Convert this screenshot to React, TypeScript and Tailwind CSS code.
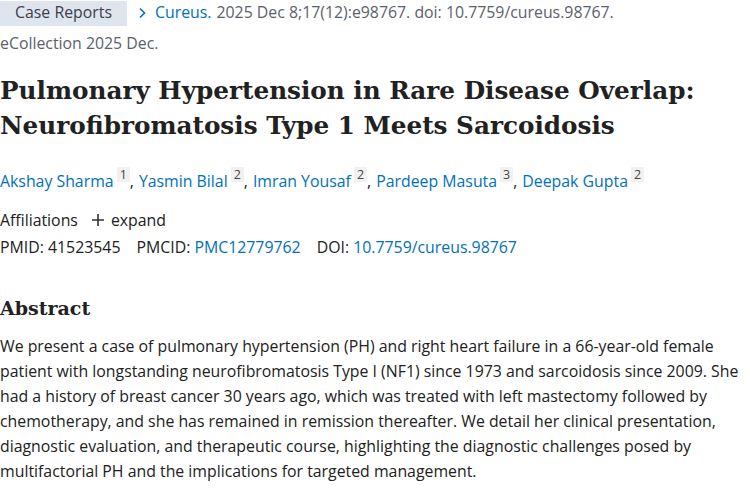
import React from 'react';

const sans = "font-['Open_Sans','Noto_Sans',sans-serif]";
const serif = "font-['DejaVu_Serif','Liberation_Serif',serif]";

const authors: { name: string; aff: string }[] = [
    { name: 'Akshay Sharma', aff: '1' },
    { name: 'Yasmin Bilal', aff: '2' },
    { name: 'Imran Yousaf', aff: '2' },
    { name: 'Pardeep Masuta', aff: '3' },
    { name: 'Deepak Gupta', aff: '2' },
];

const abstractLines = [
    'We present a case of pulmonary hypertension (PH) and right heart failure in a 66-year-old female',
    'patient with longstanding neurofibromatosis Type I (NF1) since 1973 and sarcoidosis since 2009. She',
    'had a history of breast cancer 30 years ago, which was treated with left mastectomy followed by',
    'chemotherapy, and she has remained in remission thereafter. We detail her clinical presentation,',
    'diagnostic evaluation, and therapeutic course, highlighting the diagnostic challenges posed by',
    'multifactorial PH and the implications for targeted management.',
];

export default function App() {
    return (
        <div className={`w-[750px] h-[500px] overflow-hidden bg-white text-[#212121] ${sans} text-[15.85px]`}>
            <div className="flex items-center h-[26px]">
                <span className="bg-[#dfe5ef] text-[#3b4048] h-[25px] w-[127px] flex items-center justify-center text-[15.85px]">
                    Case Reports
                </span>
                <span className="ml-[11px] text-[#0071bc] flex items-center">
                    <svg width="9" height="12" viewBox="0 0 9 12" className="mr-[8px]">
                        <path d="M2 1.5 L6.5 6 L2 10.5" fill="none" stroke="#0071bc" strokeWidth="1.6" />
                    </svg>
                    Cureus.
                </span>
                <span className="ml-[5px] text-[#5b616b] whitespace-nowrap">2025 Dec 8;17(12):e98767. doi: 10.7759/cureus.98767.</span>
            </div>
            <div className="text-[#5b616b] mt-[4px] leading-[26px]">eCollection 2025 Dec.</div>

            <h1 className={`${serif} font-bold text-[24.7px] leading-[35px] mt-[17px] text-[#212121]`}>
                <span className="block whitespace-nowrap">Pulmonary Hypertension in Rare Disease Overlap:</span>
                <span className="block whitespace-nowrap">Neurofibromatosis Type 1 Meets Sarcoidosis</span>
            </h1>

            <div className="mt-[26px] flex items-center whitespace-nowrap leading-[24px]">
                {authors.map((a, i) => (
                    <span key={a.name} className="flex items-center">
                        <span className="text-[#0071bc]">{a.name}</span>
                        <span className="ml-[3px] self-start mt-[-2px] bg-[#f1f1f1] text-[#444] text-[12.5px] leading-[15px] px-[3px]">{a.aff}</span>
                        {i < authors.length - 1 && <span className="mr-[5px]">,</span>}
                    </span>
                ))}
            </div>

            <div className="mt-[15px] flex items-center leading-[24px]">
                <span>Affiliations</span>
                <span className="ml-[13px] flex items-center">
                    <svg width="14" height="14" viewBox="0 0 14 14" className="mr-[6px]">
                        <path d="M7 1 V13 M1 7 H13" stroke="#333" strokeWidth="1.6" />
                    </svg>
                    expand
                </span>
            </div>

            <div className="mt-[3px] flex items-center gap-[16px] leading-[24px] whitespace-nowrap">
                <span>PMID: 41523545</span>
                <span>
                    PMCID: <span className="text-[#0071bc]">PMC12779762</span>
                </span>
                <span>
                    DOI: <span className="text-[#0071bc]">10.7759/cureus.98767</span>
                </span>
            </div>

            <h2 className={`${serif} font-bold text-[19px] leading-[28px] mt-[35px]`}>Abstract</h2>

            <div className="mt-[12px] leading-[25px]">
                {abstractLines.map((l) => (
                    <div key={l} className="whitespace-nowrap">{l}</div>
                ))}
            </div>
        </div>
    );
}
